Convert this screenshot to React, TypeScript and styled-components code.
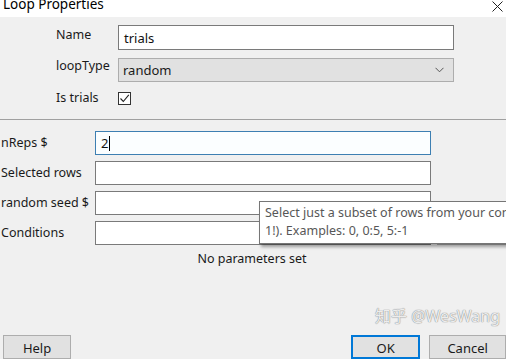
import React from "react";
import styled, { createGlobalStyle } from "styled-components";

const Global = createGlobalStyle`
  html, body { margin: 0; padding: 0; background: #f0f0f0; overflow: hidden; }
  body { font-family: "Noto Sans", "Noto Sans CJK SC", sans-serif; font-size: 12.5px; color: #1a1a1a; }
  * { box-sizing: border-box; }
`;

const Window = styled.div`
  position: relative;
  width: 506px;
  height: 359px;
  display: flex;
  flex-direction: column;
  background: #f0f0f0;
  overflow: hidden;
`;

const TitleBar = styled.div`
  height: 17px;
  background: #ffffff;
  display: flex;
  align-items: flex-start;
  justify-content: space-between;
  padding: 0 3px 0 3px;
  overflow: hidden;
`;

const Title = styled.span`
  font-size: 13.5px;
  line-height: 14px;
  margin-top: -3px;
  color: #000;
`;

const Close = styled.span`
  display: flex;
  margin-top: 1px;
`;

const TopGrid = styled.div`
  display: grid;
  grid-template-columns: 62px 336px;
  row-gap: 8px;
  padding: 8px 0 13px 56px;
  align-items: center;
  border-bottom: 1px solid #a0a0a0;
`;

const Label = styled.span`
  line-height: 16px;
  white-space: nowrap;
`;

const TopLabel = styled(Label)<{ $shift?: number }>`
  position: relative;
  top: ${(p) => p.$shift ?? 0}px;
`;

const TextBox = styled.div<{ $focus?: boolean; $h?: number }>`
  height: ${(p) => p.$h ?? 24}px;
  background: ${(p) => (p.$focus ? "#fbfeff" : "#ffffff")};
  border: 1px solid ${(p) => (p.$focus ? "#3d7fb2" : "#7a7a7a")};
  display: flex;
  align-items: center;
  padding-left: 5px;
  font-size: 13px;
  color: #111;
`;

const Caret = styled.span`
  display: inline-block;
  width: 1px;
  height: 15px;
  background: #000;
  margin-left: 1px;
`;

const Select = styled.div`
  height: 24px;
  background: #e1e1e1;
  border: 1px solid #adadad;
  display: flex;
  align-items: center;
  justify-content: space-between;
  padding: 0 9px 0 4px;
  font-size: 13px;
`;

const CheckBox = styled.div`
  width: 13px;
  height: 13px;
  border: 1px solid #333;
  background: #fff;
  display: flex;
  align-items: center;
  justify-content: center;
`;

const Lower = styled.div`
  display: grid;
  grid-template-columns: 94px 336px 1fr;
  grid-auto-rows: 24px;
  row-gap: 6px;
  padding: 11px 0 0 1px;
  align-items: center;
`;

const SideButton = styled.div`
  margin-left: 6px;
  height: 24px;
  background: #e1e1e1;
  border: 1px solid #adadad;
`;

const Empty = styled.div``;

const Note = styled.div`
  text-align: center;
  margin-top: 6px;
  padding-right: 2px;
  line-height: 16px;
`;

const Spacer = styled.div`
  flex: 1;
`;

const ButtonRow = styled.div`
  display: flex;
  align-items: flex-end;
  padding: 0 0 0 3px;
  height: 24px;
`;

const Button = styled.div<{ $primary?: boolean; $w: number; $ml?: number }>`
  width: ${(p) => p.$w}px;
  margin-left: ${(p) => p.$ml ?? 0}px;
  height: 24px;
  background: #e1e1e1;
  border: ${(p) => (p.$primary ? "2px solid #0078d7" : "1px solid #adadad")};
  display: flex;
  align-items: center;
  justify-content: center;
  font-size: 13px;
  padding-top: 1px;
`;

const Tooltip = styled.div`
  position: absolute;
  left: 259px;
  top: 201px;
  width: 400px;
  height: 43px;
  background: #ffffff;
  border: 1px solid #767676;
  box-shadow: 2px 3px 3px rgba(0, 0, 0, 0.35);
  color: #575757;
  font-size: 12.5px;
  line-height: 18px;
  padding: 2px 0 0 5px;
  white-space: nowrap;
`;

const Watermark = styled.div`
  position: absolute;
  left: 375px;
  top: 306px;
  font-size: 16px;
  line-height: 20px;
  color: rgba(255, 255, 255, 0.85);
  text-shadow: 0 0 1px #8a8a8a, 0 0 1px #8a8a8a;
  white-space: nowrap;
`;

const Chevron = () => (
  <svg width="9" height="6" viewBox="0 0 9 6">
    <path d="M0.5 0.8 L4.5 4.8 L8.5 0.8" fill="none" stroke="#555" strokeWidth="1" />
  </svg>
);

const Check = () => (
  <svg width="11" height="11" viewBox="0 0 11 11">
    <path d="M1.5 5.5 L4.3 8.5 L9.8 1.8" fill="none" stroke="#222" strokeWidth="1.1" />
  </svg>
);

const CloseIcon = () => (
  <svg width="11" height="11" viewBox="0 0 11 11">
    <path d="M0.5 0.5 L10.5 10.5 M10.5 0.5 L0.5 10.5" fill="none" stroke="#222" strokeWidth="1" />
  </svg>
);

export default function App() {
  return (
    <Window>
      <Global />
      <TitleBar>
        <Title>Loop Properties</Title>
        <Close>
          <CloseIcon />
        </Close>
      </TitleBar>
      <TopGrid>
        <TopLabel $shift={-3}>Name</TopLabel>
        <TextBox $h={25}>trials</TextBox>
        <TopLabel $shift={-4}>loopType</TopLabel>
        <Select>
          <span>random</span>
          <Chevron />
        </Select>
        <TopLabel>Is trials</TopLabel>
        <CheckBox>
          <Check />
        </CheckBox>
      </TopGrid>
      <Lower>
        <Label>nReps $</Label>
        <TextBox $focus>
          2<Caret />
        </TextBox>
        <Empty />
        <Label>Selected rows</Label>
        <TextBox />
        <Empty />
        <Label>random seed $</Label>
        <TextBox />
        <Empty />
        <Label>Conditions</Label>
        <TextBox />
        <SideButton />
      </Lower>
      <Note>No parameters set</Note>
      <Spacer />
      <ButtonRow>
        <Button $w={71}>Help</Button>
        <Button $w={72} $ml={280} $primary>
          OK
        </Button>
        <Button $w={80} $ml={9}>
          Cancel
        </Button>
      </ButtonRow>
      <Tooltip>
        Select just a subset of rows from your conditions file (the first is 0, not
        <br />
        1!). Examples: 0, 0:5, 5:-1
      </Tooltip>
      <Watermark>知乎 @WesWang</Watermark>
    </Window>
  );
}
